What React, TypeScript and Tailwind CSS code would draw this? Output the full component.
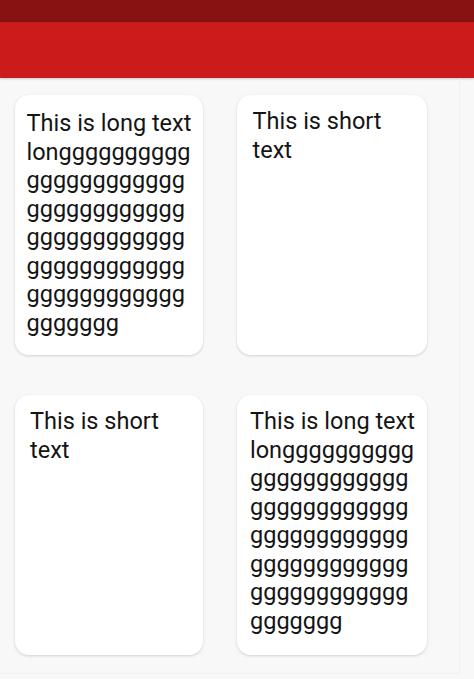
const LONG_LINES = [
  "This is long text",
  "lon" + "g".repeat(10),
  "g".repeat(12),
  "g".repeat(12),
  "g".repeat(12),
  "g".repeat(12),
  "g".repeat(12),
  "g".repeat(7),
];

const SHORT_LINES = ["This is short", "text"];

function Card({ lines, pad }: { lines: string[]; pad: string }) {
  return (
    <div
      className={`h-[260px] rounded-[14px] bg-white shadow-[0_1px_3px_rgba(0,0,0,0.16)] ${pad}`}
    >
      <div className="text-[23.5px] leading-[28.5px] text-[#141414]">
        {lines.map((l, i) => (
          <div key={i} className="whitespace-nowrap">
            {l}
          </div>
        ))}
      </div>
    </div>
  );
}

export default function App() {
  return (
    <div
      className="flex h-[679px] w-[474px] flex-col overflow-hidden bg-[#f8f8f8]"
      style={{ fontFamily: "Roboto, 'Noto Sans', sans-serif" }}
    >
      <div className="h-[22px] shrink-0 bg-[#861212]" />
      <div className="h-[56px] shrink-0 bg-[#cc1b1b] shadow-[0_1px_2px_rgba(0,0,0,0.2)]" />
      <div className="flex flex-1">
        <div className="h-[596px] w-[460px] border-r border-b border-[#f0f0f0] pl-[15px] pt-[17px]">
          <div className="grid grid-cols-[188px_190px] gap-x-[34px] gap-y-[40px]">
            <Card lines={LONG_LINES} pad="pl-[11.5px] pt-[14px]" />
            <Card lines={SHORT_LINES} pad="pl-[15.5px] pt-[12px]" />
            <Card lines={SHORT_LINES} pad="pl-[15px] pt-[12px]" />
            <Card lines={LONG_LINES} pad="pl-[13px] pt-[12px]" />
          </div>
        </div>
      </div>
    </div>
  );
}
